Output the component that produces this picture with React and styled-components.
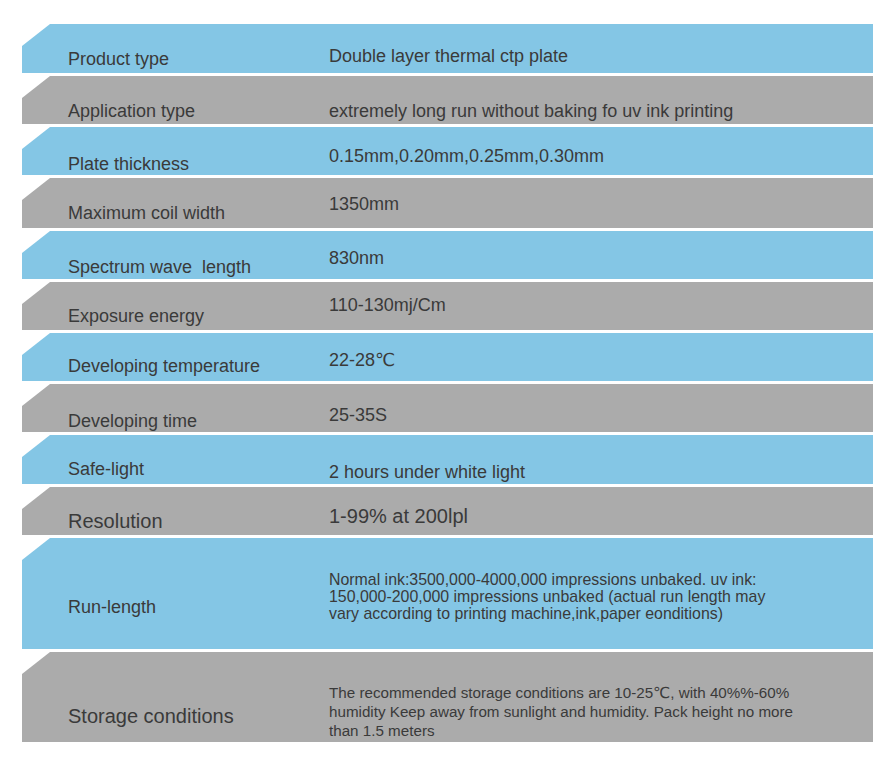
import React from "react";
import styled, { createGlobalStyle } from "styled-components";

const Global = createGlobalStyle`
  html, body { margin: 0; padding: 0; background: #ffffff; }
  body { font-family: "Liberation Sans", Arial, "DejaVu Sans", sans-serif; }
`;

const Sheet = styled.div`
  display: flex;
  flex-direction: column;
  gap: 3px;
  width: 851px;
  padding: 24px 0 0 22px;
`;

const Row = styled.div`
  display: grid;
  grid-template-columns: 261px 1fr;
  padding-left: 46px;
  height: ${(p) => p.$h}px;
  box-sizing: border-box;
  background: ${(p) => (p.$tone === "blue" ? "#84c6e5" : "#ababab")};
  clip-path: polygon(28px 0, 100% 0, 100% 100%, 0 100%, 0 22px);
  color: #3a3a3a;
`;

const Label = styled.div`
  padding-top: ${(p) => p.$top}px;
  font-size: ${(p) => p.$size || 18}px;
  line-height: ${(p) => (p.$size ? p.$size + 2 : 20)}px;
  white-space: pre;
`;

const Value = styled.div`
  padding-top: ${(p) => p.$top}px;
  font-size: ${(p) => p.$size || 18}px;
  line-height: ${(p) => p.$lh || (p.$size ? p.$size + 2 : 20)}px;
  white-space: nowrap;
`;

const rows = [
  { h: 49, label: "Product type", lt: 25, value: "Double layer thermal ctp plate", vt: 22 },
  { h: 48, label: "Application type", lt: 25, value: "extremely long run without baking fo uv ink printing", vt: 25 },
  { h: 48, label: "Plate thickness", lt: 27, value: "0.15mm,0.20mm,0.25mm,0.30mm", vt: 19 },
  { h: 50, label: "Maximum coil width", lt: 25, value: "1350mm", vt: 16 },
  { h: 48, label: "Spectrum wave  length", lt: 26, value: "830nm", vt: 17 },
  { h: 48, label: "Exposure energy", lt: 24, value: "110-130mj/Cm", vt: 13 },
  { h: 48, label: "Developing temperature", lt: 23, value: "22-28\u2103", vt: 17 },
  { h: 48, label: "Developing time", lt: 27, value: "25-35S", vt: 21 },
  { h: 49, label: "Safe-light", lt: 24, value: "2 hours under white light", vt: 27 },
  { h: 48, label: "Resolution", lt: 23, ls: 20, value: "1-99% at 200lpl", vt: 18, vs: 20 },
  {
    h: 111,
    label: "Run-length",
    lt: 59,
    value: [
      "Normal ink:3500,000-4000,000 impressions unbaked. uv ink:",
      "150,000-200,000 impressions unbaked (actual run length may",
      "vary according to printing machine,ink,paper eonditions)",
    ],
    vt: 33,
    vs: 15.9,
    vl: 17,
  },
  {
    h: 90,
    label: "Storage conditions",
    lt: 53,
    ls: 20,
    value: [
      "The recommended storage conditions are 10-25\u2103, with 40%%-60%",
      "humidity Keep away from sunlight and humidity. Pack height no more",
      "than 1.5 meters",
    ],
    vt: 31,
    vs: 15.2,
    vl: 19,
  },
];

export default function App() {
  return (
    <>
      <Global />
      <Sheet>
        {rows.map((r, i) => (
          <Row key={i} $h={r.h} $tone={i % 2 === 0 ? "blue" : "gray"}>
            <Label $top={r.lt} $size={r.ls}>{r.label}</Label>
            <Value $top={r.vt} $size={r.vs} $lh={r.vl}>
              {Array.isArray(r.value)
                ? r.value.map((line, j) => <div key={j}>{line}</div>)
                : r.value}
            </Value>
          </Row>
        ))}
      </Sheet>
    </>
  );
}
